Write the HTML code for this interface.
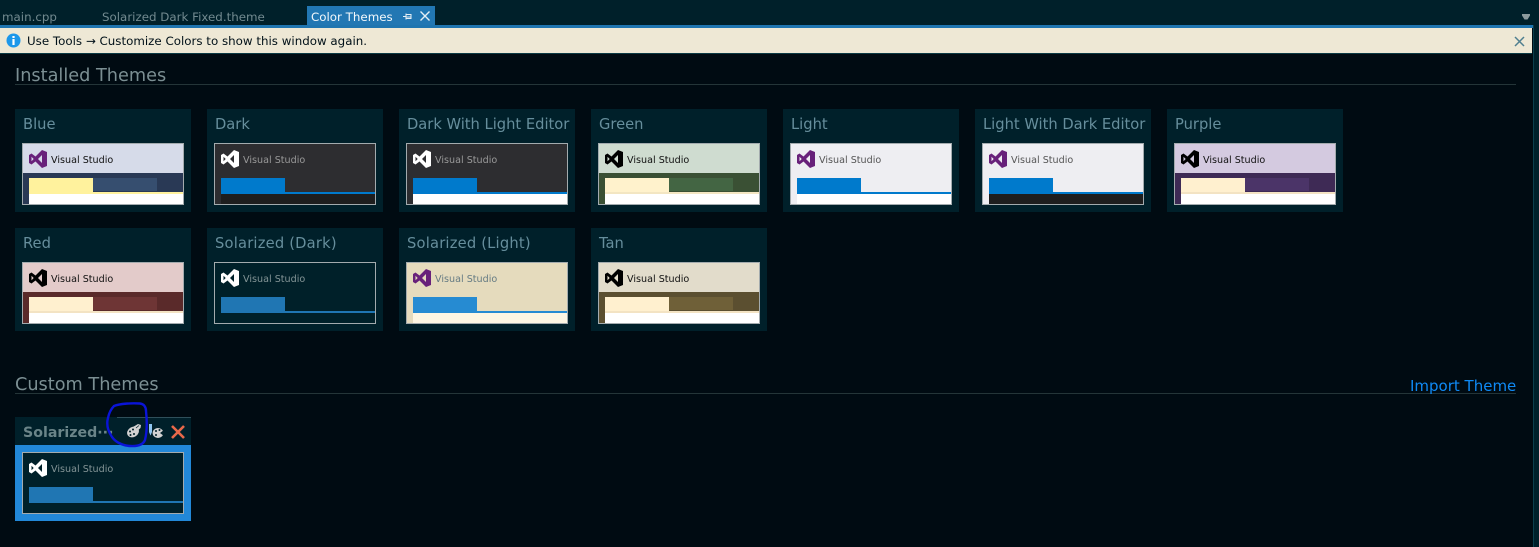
<!DOCTYPE html>
<html><head><meta charset="utf-8"><title>Color Themes</title>
<style>
html,body{margin:0;padding:0;width:1539px;height:547px;overflow:hidden;background:#000b12;font-family:"DejaVu Sans","Liberation Sans",sans-serif}
.a{position:absolute}
#top{left:0;top:0;width:1539px;height:25px;background:#00202a}
#right{left:1533px;top:25px;width:6px;height:522px;background:#00202a;border-left:1px solid #0b3f4d;box-sizing:border-box}
#blue{left:0;top:25px;width:1533px;height:3px;background:#1f75b0}
#info{left:0;top:28px;width:1532px;height:25px;background:#eee8d5;color:#001018;font-size:11.85px;line-height:26px}
#infoline{left:0;top:53px;width:1532px;height:1px;background:#0b3a44}
.tab{top:9px;font-size:11.85px;line-height:15px;color:#728a90;white-space:nowrap}
.sec{left:15px;font-size:17.7px;line-height:22px;color:#7b8f93;white-space:nowrap}
.rule{left:15px;width:1501px;height:1px;background:#243538}
.card{position:absolute;width:176px;height:103px;background:#00202a}
.card .t{position:absolute;left:8px;top:6px;font-size:14.7px;line-height:20px;color:#668e9c;white-space:nowrap}
.p{position:absolute;left:7px;top:34px;width:162px;height:62px;box-sizing:border-box;border:1px solid #a3abae;background:var(--b);overflow:hidden}
.p .h{position:absolute;left:0;top:0;width:160px;height:29px;background:var(--h)}
.p .b1{position:absolute;left:6px;top:34px;width:64px;height:14px;background:var(--a)}
.p .b2{position:absolute;left:70px;top:34px;width:64px;height:13px;background:var(--c)}
.p .l{position:absolute;left:6px;top:48px;width:154px;height:2px;background:var(--l)}
.p .e{position:absolute;left:6px;top:50px;width:154px;height:10px;background:var(--e)}
.p svg{position:absolute;left:6px;top:6px;width:18px;height:18px;fill:var(--g)}
.p .v{position:absolute;left:28px;top:10px;font-size:9.6px;line-height:14px;color:var(--x);white-space:nowrap}
</style></head><body>
<div class="a" id="top"></div>
<div class="a tab" style="left:2px;top:10px">main.cpp</div>
<div class="a tab" style="left:102px;top:10px">Solarized Dark Fixed.theme</div>
<div class="a" style="left:307px;top:6px;width:128px;height:19px;background:#2277b3"></div>
<div class="a tab" style="left:311px;top:10px;color:#fff;opacity:.95">Color Themes</div>
<svg class="a" style="left:401px;top:11px" width="12" height="11" viewBox="0 0 12 11"><path d="M2 5.5H5M5 2.5V8.5M5 3.5H10V7.5H5M5 6H10" stroke="#e6eff5" stroke-width="1" fill="none"/></svg>
<svg class="a" style="left:419px;top:10px" width="12" height="12" viewBox="0 0 12 12"><path d="M1.5 1.5L10.5 10.5M10.5 1.5L1.5 10.5" stroke="#e6eff5" stroke-width="1.4" fill="none"/></svg>
<svg class="a" style="left:1521px;top:14px" width="10" height="6" viewBox="0 0 10 6"><path d="M1 0H9V1.5L6.5 5.5H3.5L1 1.5Z" fill="#8c9a9d"/></svg>
<div class="a" id="right"></div>
<div class="a" id="blue"></div>
<div class="a" id="info"><span class="a" style="left:27px;top:0;white-space:nowrap">Use Tools → Customize Colors to show this window again.</span></div>
<svg class="a" style="left:6px;top:33px" width="15" height="15" viewBox="0 0 15 15"><circle cx="7.5" cy="7.5" r="7" fill="#1c97ea"/><rect x="6.4" y="6" width="2.2" height="6" fill="#fff"/><rect x="6.4" y="3" width="2.2" height="2" fill="#fff"/></svg>
<svg class="a" style="left:1514px;top:36px" width="11" height="11" viewBox="0 0 11 11"><path d="M1 1L10 10M10 1L1 10" stroke="#4f7f8f" stroke-width="1.5" fill="none"/></svg>
<div class="a" id="infoline"></div>

<div class="a sec" style="top:65px">Installed Themes</div>
<div class="a rule" style="top:84px"></div>

<div class="card" style="left:15px;top:109px;--h:#d6dbe9;--b:#293955;--a:#fff29d;--c:#364e6f;--l:#fff29d;--e:#fff;--g:#68217a;--x:#111"><div class="t">Blue</div><div class="p"><div class="h"></div><svg viewBox="0 0 18 18"><path fill-rule="evenodd" d="M13 0L18 2V16L13 18L6.5 11.5L2.5 14.5L0 13V5L2.5 3.5L6.5 6.5ZM13 5L9 9L13 13ZM2.5 6.8V11.2L4.7 9Z"/></svg><div class="v">Visual Studio</div><div class="b1"></div><div class="b2"></div><div class="l"></div><div class="e"></div></div></div>

<div class="card" style="left:207px;top:109px;--h:#2d2d30;--b:#2d2d30;--a:#007acc;--c:#2d2d30;--l:#007acc;--e:#1e1e1e;--g:#fff;--x:#999"><div class="t">Dark</div><div class="p"><div class="h"></div><svg viewBox="0 0 18 18"><path fill-rule="evenodd" d="M13 0L18 2V16L13 18L6.5 11.5L2.5 14.5L0 13V5L2.5 3.5L6.5 6.5ZM13 5L9 9L13 13ZM2.5 6.8V11.2L4.7 9Z"/></svg><div class="v">Visual Studio</div><div class="b1"></div><div class="b2"></div><div class="l"></div><div class="e"></div></div></div>

<div class="card" style="left:399px;top:109px;--h:#2d2d30;--b:#2d2d30;--a:#007acc;--c:#2d2d30;--l:#007acc;--e:#fff;--g:#fff;--x:#999"><div class="t">Dark With Light Editor</div><div class="p"><div class="h"></div><svg viewBox="0 0 18 18"><path fill-rule="evenodd" d="M13 0L18 2V16L13 18L6.5 11.5L2.5 14.5L0 13V5L2.5 3.5L6.5 6.5ZM13 5L9 9L13 13ZM2.5 6.8V11.2L4.7 9Z"/></svg><div class="v">Visual Studio</div><div class="b1"></div><div class="b2"></div><div class="l"></div><div class="e"></div></div></div>

<div class="card" style="left:591px;top:109px;--h:#cfdcd0;--b:#3a5034;--a:#fff2cc;--c:#436543;--l:#f3e6c2;--e:#fff;--g:#000;--x:#111"><div class="t">Green</div><div class="p"><div class="h"></div><svg viewBox="0 0 18 18"><path fill-rule="evenodd" d="M13 0L18 2V16L13 18L6.5 11.5L2.5 14.5L0 13V5L2.5 3.5L6.5 6.5ZM13 5L9 9L13 13ZM2.5 6.8V11.2L4.7 9Z"/></svg><div class="v">Visual Studio</div><div class="b1"></div><div class="b2"></div><div class="l"></div><div class="e"></div></div></div>

<div class="card" style="left:783px;top:109px;--h:#eeeef2;--b:#eeeef2;--a:#007acc;--c:#eeeef2;--l:#007acc;--e:#fff;--g:#68217a;--x:#555"><div class="t">Light</div><div class="p"><div class="h"></div><svg viewBox="0 0 18 18"><path fill-rule="evenodd" d="M13 0L18 2V16L13 18L6.5 11.5L2.5 14.5L0 13V5L2.5 3.5L6.5 6.5ZM13 5L9 9L13 13ZM2.5 6.8V11.2L4.7 9Z"/></svg><div class="v">Visual Studio</div><div class="b1"></div><div class="b2"></div><div class="l"></div><div class="e"></div></div></div>

<div class="card" style="left:975px;top:109px;--h:#eeeef2;--b:#eeeef2;--a:#007acc;--c:#eeeef2;--l:#007acc;--e:#1e1e1e;--g:#68217a;--x:#555"><div class="t">Light With Dark Editor</div><div class="p"><div class="h"></div><svg viewBox="0 0 18 18"><path fill-rule="evenodd" d="M13 0L18 2V16L13 18L6.5 11.5L2.5 14.5L0 13V5L2.5 3.5L6.5 6.5ZM13 5L9 9L13 13ZM2.5 6.8V11.2L4.7 9Z"/></svg><div class="v">Visual Studio</div><div class="b1"></div><div class="b2"></div><div class="l"></div><div class="e"></div></div></div>

<div class="card" style="left:1167px;top:109px;--h:#d4cae0;--b:#3e2a55;--a:#fff0cf;--c:#4b3468;--l:#f3e3c3;--e:#fff;--g:#000;--x:#111"><div class="t">Purple</div><div class="p"><div class="h"></div><svg viewBox="0 0 18 18"><path fill-rule="evenodd" d="M13 0L18 2V16L13 18L6.5 11.5L2.5 14.5L0 13V5L2.5 3.5L6.5 6.5ZM13 5L9 9L13 13ZM2.5 6.8V11.2L4.7 9Z"/></svg><div class="v">Visual Studio</div><div class="b1"></div><div class="b2"></div><div class="l"></div><div class="e"></div></div></div>

<div class="card" style="left:15px;top:228px;--h:#e3cbca;--b:#5a2a2a;--a:#fff0cf;--c:#6e3535;--l:#f3e3c3;--e:#fff;--g:#000;--x:#111"><div class="t">Red</div><div class="p"><div class="h"></div><svg viewBox="0 0 18 18"><path fill-rule="evenodd" d="M13 0L18 2V16L13 18L6.5 11.5L2.5 14.5L0 13V5L2.5 3.5L6.5 6.5ZM13 5L9 9L13 13ZM2.5 6.8V11.2L4.7 9Z"/></svg><div class="v">Visual Studio</div><div class="b1"></div><div class="b2"></div><div class="l"></div><div class="e"></div></div></div>

<div class="card" style="left:207px;top:228px;--h:#002029;--b:#002029;--a:#2076b3;--c:#002029;--l:#2076b3;--e:#002029;--g:#fff;--x:#839496"><div class="t" style="letter-spacing:.2px">Solarized (Dark)</div><div class="p"><div class="h"></div><svg viewBox="0 0 18 18"><path fill-rule="evenodd" d="M13 0L18 2V16L13 18L6.5 11.5L2.5 14.5L0 13V5L2.5 3.5L6.5 6.5ZM13 5L9 9L13 13ZM2.5 6.8V11.2L4.7 9Z"/></svg><div class="v">Visual Studio</div><div class="b1"></div><div class="b2"></div><div class="l"></div><div class="e"></div></div></div>

<div class="card" style="left:399px;top:228px;--h:#e5dbbd;--b:#e5dbbd;--a:#268bd2;--c:#e5dbbd;--l:#268bd2;--e:#fdf6e3;--g:#68217a;--x:#657b83"><div class="t" style="letter-spacing:.2px">Solarized (Light)</div><div class="p"><div class="h"></div><svg viewBox="0 0 18 18"><path fill-rule="evenodd" d="M13 0L18 2V16L13 18L6.5 11.5L2.5 14.5L0 13V5L2.5 3.5L6.5 6.5ZM13 5L9 9L13 13ZM2.5 6.8V11.2L4.7 9Z"/></svg><div class="v">Visual Studio</div><div class="b1"></div><div class="b2"></div><div class="l"></div><div class="e"></div></div></div>

<div class="card" style="left:591px;top:228px;--h:#e2dccb;--b:#5b4f30;--a:#fff0cf;--c:#6f6038;--l:#f3e3c3;--e:#fff;--g:#000;--x:#111"><div class="t">Tan</div><div class="p"><div class="h"></div><svg viewBox="0 0 18 18"><path fill-rule="evenodd" d="M13 0L18 2V16L13 18L6.5 11.5L2.5 14.5L0 13V5L2.5 3.5L6.5 6.5ZM13 5L9 9L13 13ZM2.5 6.8V11.2L4.7 9Z"/></svg><div class="v">Visual Studio</div><div class="b1"></div><div class="b2"></div><div class="l"></div><div class="e"></div></div></div>

<div class="a sec" style="top:374px">Custom Themes</div>
<div class="a rule" style="top:393px"></div>
<div class="a" style="left:1410px;top:376px;font-size:15px;line-height:20px;color:#0f8af5;white-space:nowrap">Import Theme</div>

<div class="card" style="left:15px;top:417px;height:104px;background:#2288d8;--h:#002029;--b:#002029;--a:#2076b3;--c:#002029;--l:#2076b3;--e:#002029;--g:#fff;--x:#839496">
<div class="a" style="left:0;top:0;width:176px;height:28px;background:#00202a"></div>
<div class="a" style="left:102px;top:0;width:74px;height:1px;background:#2f4f5a"></div>
<div class="t" style="font-weight:bold;top:6px;color:#6a8488;font-size:14.2px">Solarized···</div>
<div class="p" style="top:35px"><div class="h"></div><svg viewBox="0 0 18 18"><path fill-rule="evenodd" d="M13 0L18 2V16L13 18L6.5 11.5L2.5 14.5L0 13V5L2.5 3.5L6.5 6.5ZM13 5L9 9L13 13ZM2.5 6.8V11.2L4.7 9Z"/></svg><div class="v">Visual Studio</div><div class="b1"></div><div class="b2"></div><div class="l"></div><div class="e"></div></div>
</div>
<svg class="a" style="left:100px;top:400px" width="95" height="50" viewBox="0 0 95 50">
<ellipse cx="33" cy="32" rx="6.2" ry="5" transform="rotate(-30 33 32)" fill="#d2d2d2"/>
<path d="M33 27L38 24L41 25L40.5 28L36 32L33.5 30Z" fill="#d2d2d2"/>
<circle cx="30" cy="31.5" r="1" fill="#00202a"/><circle cx="33" cy="29.5" r="1" fill="#00202a"/><circle cx="30.5" cy="35" r="1" fill="#00202a"/><circle cx="34" cy="34" r="1" fill="#00202a"/>
<path d="M36 28L39 25.5" stroke="#00202a" stroke-width=".8"/>
<rect x="49" y="24" width="3" height="8" fill="#8fc6f0"/><path d="M49 32H52L50.5 35.5Z" fill="#8fc6f0"/>
<ellipse cx="58" cy="33" rx="5.4" ry="5" fill="#d2d2d2"/>
<path d="M64 30L60 33L64 36Z" fill="#00202a"/>
<circle cx="56" cy="31" r="1" fill="#00202a"/><circle cx="59.5" cy="30" r="1" fill="#00202a"/><circle cx="56" cy="35" r="1" fill="#00202a"/>
<path d="M72 26L84 38M84 26L72 38" stroke="#e8694a" stroke-width="2.6" fill="none"/>
<path d="M14 6C20 3.5 32 3 40 3.5C44 4 46 7 46 11C47 20 47 32 45 40C43 45 38 46.5 30 46C24 45.5 17 44 12 37C8 31 6 25 8 18C9 13 11 9 14 6Z" stroke="#0a14d8" stroke-width="2.4" fill="none"/>
</svg>
</body></html>
